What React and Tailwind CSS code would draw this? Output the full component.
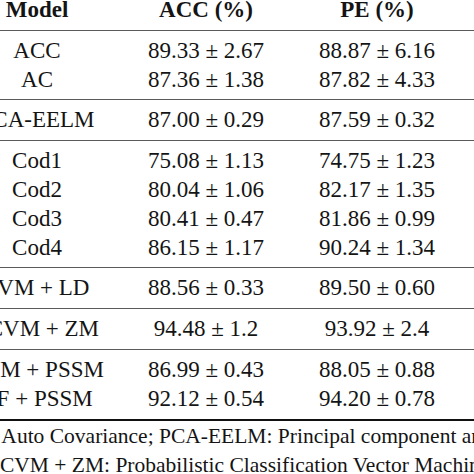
const groups = [
  [
    ["ACC", "89.33 ± 2.67", "88.87 ± 6.16"],
    ["AC", "87.36 ± 1.38", "87.82 ± 4.33"],
  ],
  [["PCA-EELM", "87.00 ± 0.29", "87.59 ± 0.32"]],
  [
    ["Cod1", "75.08 ± 1.13", "74.75 ± 1.23"],
    ["Cod2", "80.04 ± 1.06", "82.17 ± 1.35"],
    ["Cod3", "80.41 ± 0.47", "81.86 ± 0.99"],
    ["Cod4", "86.15 ± 1.17", "90.24 ± 1.34"],
  ],
  [["SVM + LD", "88.56 ± 0.33", "89.50 ± 0.60"]],
  [["PCVM + ZM", "94.48 ± 1.2", "93.92 ± 2.4"]],
  [
    ["RVM + PSSM", "86.99 ± 0.43", "88.05 ± 0.88"],
    ["RF + PSSM", "92.12 ± 0.54", "94.20 ± 0.78"],
  ],
];

const Row = ({ cells, bold }) => (
  <div
    className={
      "grid grid-cols-[154px_184px_158px] h-[28.8px] leading-[29px] text-center whitespace-nowrap " +
      (bold ? "font-bold" : "")
    }
  >
    {cells.map((c, i) => (
      <div key={i}>{c}</div>
    ))}
  </div>
);

export default function App() {
  return (
    <div className="w-[474px] h-[474px] overflow-hidden bg-white text-[#141414] font-['Liberation_Serif',serif] text-[23px]">
      <div className="ml-[-40px] w-[560px]">
        {/* cabecera */}
        <div className="mt-[-5px] pb-[6px]">
          <Row cells={["Model", "ACC (%)", "PE (%)"]} bold />
        </div>

        {/* grupos de filas */}
        {groups.map((g, gi) => (
          <div key={gi} className="border-t border-[#5a5a5a] pt-[5px] pb-[6px]">
            {g.map((r, ri) => (
              <Row key={ri} cells={r} />
            ))}
          </div>
        ))}
      </div>

      {/* nota al pie */}
      <div className="border-t-2 border-[#111] pt-[1px] text-[21.5px] leading-[29px] whitespace-nowrap">
        <div className="ml-[-53px]">ACC: Auto Covariance; PCA-EELM: Principal component analysis</div>
        <div className="ml-[-12px]">PCVM + ZM: Probabilistic Classification Vector Machine</div>
      </div>
    </div>
  );
}
